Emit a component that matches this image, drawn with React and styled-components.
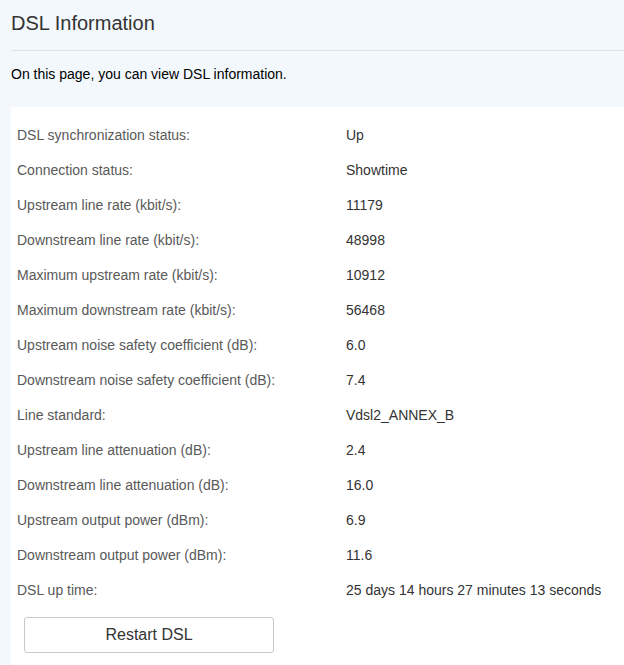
import React from 'react';
import styled, { createGlobalStyle } from 'styled-components';

const GlobalStyle = createGlobalStyle`
  html, body {
    margin: 0;
    padding: 0;
    background: #f3f8fd;
  }
  body {
    font-family: "Liberation Sans", Arial, sans-serif;
  }
`;

const Page = styled.div`
  padding: 0 0 0 11px;
  min-height: 665px;
  box-sizing: border-box;
  display: flex;
  flex-direction: column;
`;

const Title = styled.h1`
  margin: 0;
  height: 50px;
  line-height: 46px;
  font-size: 20px;
  font-weight: normal;
  color: #333;
  border-bottom: 1px solid #e3e3e3;
`;

const Intro = styled.p`
  margin: 0;
  height: 56px;
  line-height: 46px;
  font-size: 14px;
  color: #000;
`;

const Panel = styled.div`
  flex: 1;
  background: #fff;
  padding: 10px 0 0 6px;
`;

const Row = styled.div`
  display: grid;
  grid-template-columns: 329px 1fr;
  height: 35px;
  align-items: center;
  font-size: 14px;
`;

const Label = styled.span`
  color: #595959;
`;

const Value = styled.span`
  color: #333;
`;

const RestartButton = styled.button`
  margin: 10px 0 0 7px;
  width: 250px;
  height: 36px;
  background: #fff;
  border: 1px solid #c8c8c8;
  border-radius: 3px;
  font-family: "Liberation Sans", Arial, sans-serif;
  font-size: 16px;
  color: #333;
  cursor: pointer;
`;

const rows = [
  ['DSL synchronization status:', 'Up'],
  ['Connection status:', 'Showtime'],
  ['Upstream line rate (kbit/s):', '11179'],
  ['Downstream line rate (kbit/s):', '48998'],
  ['Maximum upstream rate (kbit/s):', '10912'],
  ['Maximum downstream rate (kbit/s):', '56468'],
  ['Upstream noise safety coefficient (dB):', '6.0'],
  ['Downstream noise safety coefficient (dB):', '7.4'],
  ['Line standard:', 'Vdsl2_ANNEX_B'],
  ['Upstream line attenuation (dB):', '2.4'],
  ['Downstream line attenuation (dB):', '16.0'],
  ['Upstream output power (dBm):', '6.9'],
  ['Downstream output power (dBm):', '11.6'],
  ['DSL up time:', '25 days 14 hours 27 minutes 13 seconds'],
];

export default function App() {
  return (
    <>
      <GlobalStyle />
      <Page>
        <Title>DSL Information</Title>
        <Intro>On this page, you can view DSL information.</Intro>
        <Panel>
          {rows.map(([label, value]) => (
            <Row key={label}>
              <Label>{label}</Label>
              <Value>{value}</Value>
            </Row>
          ))}
          <RestartButton type="button">Restart DSL</RestartButton>
        </Panel>
      </Page>
    </>
  );
}
